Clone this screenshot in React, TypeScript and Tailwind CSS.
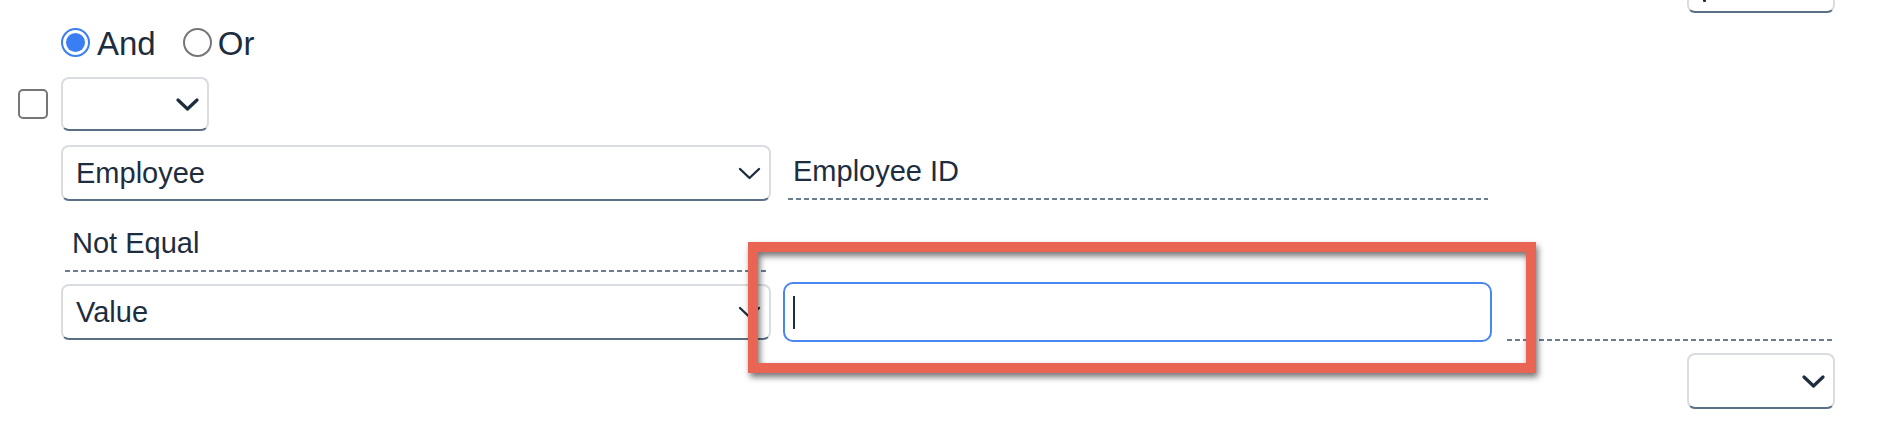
import React from 'react';

const Chevron: React.FC<{ bold?: boolean }> = ({ bold = false }) => (
  <svg width="23" height="13" viewBox="0 0 23 13" fill="none">
    <polyline
      points="2,2 11.5,11 21,2"
      stroke="#1d2d3e"
      strokeWidth={bold ? 3.2 : 2.4}
      strokeLinecap="round"
      strokeLinejoin="round"
    />
  </svg>
);

interface SelectBoxProps {
  label?: string;
  className?: string;
  bold?: boolean;
  hideChevron?: boolean;
  children?: React.ReactNode;
}

const SelectBox: React.FC<SelectBoxProps> = ({ label = '', className = '', bold = false, hideChevron = false, children }) => (
  <div
    className={`flex h-[56px] shrink-0 items-center justify-between rounded-[8px] border-2 border-[#d9dde1] border-b-[#5b6f84] bg-white pl-[13px] pr-[8px] text-[29px] leading-none ${className}`}
  >
    {children ?? <span>{label}</span>}
    {!hideChevron && <Chevron bold={bold} />}
  </div>
);

const Radio: React.FC<{ checked?: boolean; className?: string }> = ({ checked = false, className = '' }) =>
  checked ? (
    <span className={`flex h-[29px] w-[29px] items-center justify-center rounded-full border-2 border-[#3a7ef4] ${className}`}>
      <span className="h-[19px] w-[19px] rounded-full bg-[#3a7ef4]" />
    </span>
  ) : (
    <span className={`h-[29px] w-[29px] rounded-full border-2 border-[#767676] ${className}`} />
  );

const DashedLine: React.FC = () => (
  <div className="h-[2px] w-full bg-[repeating-linear-gradient(90deg,#6a7d91_0px,#6a7d91_5px,transparent_5px,transparent_8px)]" />
);

export default function App() {
  return (
    <div className="relative h-[432px] w-[1880px] overflow-hidden bg-white font-['Liberation_Sans',Arial,sans-serif] text-[#1d2d3e]">
      {/* select cut off at the top edge */}
      <div className="flex justify-end pr-[45px]">
        <SelectBox className="-mt-[43px] w-[148px] !items-end pb-[9px]" hideChevron>
          <span className="ml-[1px] h-[4px] w-[3px] rounded-[1px] bg-[#1d2d3e]" />
        </SelectBox>
      </div>

      {/* And / Or */}
      <div className="mt-[15px] ml-[61px] flex h-[29px] items-center text-[33px] leading-none">
        <Radio checked />
        <span className="ml-[7px] pt-[2px]">And</span>
        <Radio className="ml-[27px]" />
        <span className="ml-[6px] pt-[2px]">Or</span>
      </div>

      {/* checkbox + small select */}
      <div className="mt-[20px] ml-[18px] flex h-[54px] items-center">
        <span className="h-[30px] w-[30px] rounded-[5px] border-2 border-[#767676]" />
        <SelectBox className="ml-[13px] !h-[54px] w-[148px]" bold />
      </div>

      {/* field row */}
      <div className="mt-[14px] ml-[61px] flex h-[56px] items-stretch">
        <SelectBox label="Employee" className="w-[710px]" />
        <div className="ml-[17px] flex w-[700px] flex-col">
          <div className="flex flex-1 items-center pl-[5px] text-[29px] leading-none">Employee ID</div>
          <div className="mb-[1px]">
            <DashedLine />
          </div>
        </div>
      </div>

      {/* operator */}
      <div className="mt-[15px] ml-[65px] flex h-[56px] w-[703px] flex-col">
        <div className="flex flex-1 items-center pl-[7px] text-[29px] leading-none">Not Equal</div>
        <DashedLine />
      </div>

      {/* value row */}
      <div className="mt-[10px] ml-[61px] flex h-[60px] items-center">
        <SelectBox label="Value" className="w-[710px]" />
        <div className="ml-[12px] flex h-[60px] w-[709px] items-center rounded-[10px] border-2 border-[#4a86f0] bg-white pl-[8px]">
          <span className="h-[33px] w-[2px] bg-[#1d2d3e]" />
        </div>
        <div className="ml-[15px] flex h-[60px] w-[325px] flex-col justify-end pb-[1px]">
          <DashedLine />
        </div>
      </div>

      {/* bottom right select */}
      <div className="mt-[11px] flex justify-end pr-[45px]">
        <SelectBox className="w-[148px]" bold />
      </div>

      {/* highlight frame */}
      <div className="absolute left-[748px] top-[242px] h-[131px] w-[788px] border-[10px] border-[#ea6454] drop-shadow-[2px_4px_3px_rgba(0,0,0,0.55)]" />
    </div>
  );
}
